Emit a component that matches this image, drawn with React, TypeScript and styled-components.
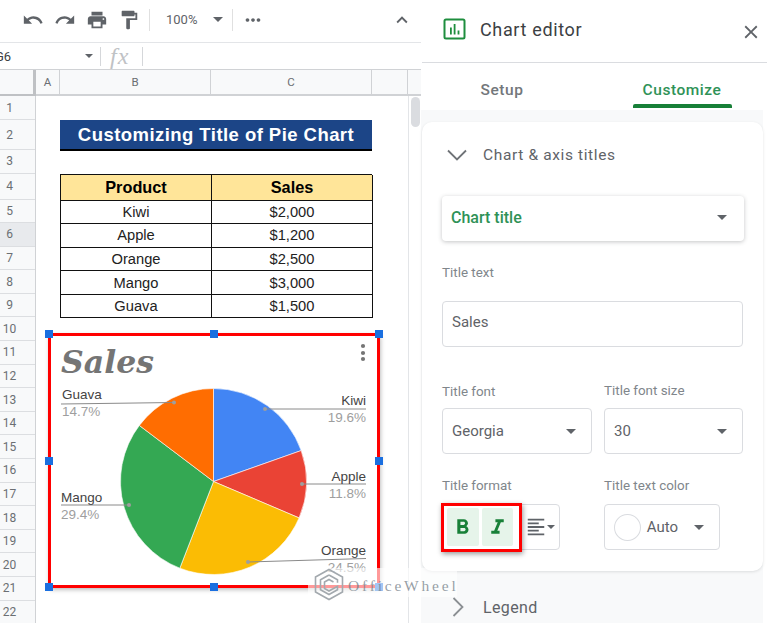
import { FC } from 'react';
import styled, { createGlobalStyle } from 'styled-components';
import {
  MdUndo, MdRedo, MdPrint, MdFormatPaint, MdMoreHoriz, MdExpandLess, MdClose,
  MdFormatBold, MdFormatItalic, MdFormatAlignLeft,
} from 'react-icons/md';

const GlobalStyle = createGlobalStyle`
  html, body { margin: 0; padding: 0; background: #fff; overflow: hidden; }
  * { box-sizing: border-box; }
`;

const rowHeights = [24, 30, 23.5, 26, 23.6, 23.6, 23.6, 23.6, 23.6, 23.6, 23.6, 23.6, 23.6, 23.6, 23.6, 23.6, 23.6, 23.6, 23.6, 23.6, 23.6, 23.6];

const products = [
  { name: 'Kiwi', sales: '$2,000' },
  { name: 'Apple', sales: '$1,200' },
  { name: 'Orange', sales: '$2,500' },
  { name: 'Mango', sales: '$3,000' },
  { name: 'Guava', sales: '$1,500' },
];

const CX = 213.5;
const CY = 481.5;
const R = 93;

const slices = [
  { pct: 19.6, color: '#4285f4' },
  { pct: 11.8, color: '#ea4335' },
  { pct: 24.5, color: '#fbbc04' },
  { pct: 29.4, color: '#34a853' },
  { pct: 14.7, color: '#ff6d01' },
];

const pieLabels = [
  { name: 'Kiwi', pct: '19.6%', x: 366, y: 405, end: true, line: '265,409 366,409' },
  { name: 'Apple', pct: '11.8%', x: 366, y: 481, end: true, line: '302,484 366,484' },
  { name: 'Orange', pct: '24.5%', x: 366, y: 555, end: true, line: '248,562 366,558.5' },
  { name: 'Mango', pct: '29.4%', x: 61, y: 502, end: false, line: '129,505 61,505' },
  { name: 'Guava', pct: '14.7%', x: 62, y: 399, end: false, line: '174,402.5 61,404' },
];

const handles = [
  ['0%', '0%'], ['50%', '0%'], ['100%', '0%'],
  ['0%', '50%'], ['100%', '50%'],
  ['0%', '100%'], ['50%', '100%'], ['100%', '100%'],
];

const slicePath = (from: number, to: number) => {
  const a0 = (from / 100) * 2 * Math.PI;
  const a1 = (to / 100) * 2 * Math.PI;
  const x0 = CX + R * Math.sin(a0);
  const y0 = CY - R * Math.cos(a0);
  const x1 = CX + R * Math.sin(a1);
  const y1 = CY - R * Math.cos(a1);
  const large = to - from > 50 ? 1 : 0;
  return `M${CX} ${CY}L${x0} ${y0}A${R} ${R} 0 ${large} 1 ${x1} ${y1}Z`;
};

const Page = styled.div`
  position: relative;
  display: flex;
  width: 767px;
  height: 623px;
  overflow: hidden;
  font-family: Roboto, "Liberation Sans", sans-serif;
`;

/* left side: the sheet */
const Sheet = styled.div`
  width: 421px;
  height: 623px;
  flex-shrink: 0;
  display: flex;
  flex-direction: column;
  overflow: hidden;
`;

const Toolbar = styled.div`
  height: 43px;
  flex-shrink: 0;
  display: flex;
  align-items: center;
  padding: 0 8px 3px 22px;
  color: #5f6368;
  border-bottom: 1px solid #e3e5e8;
`;

const ToolIcon = styled.span<{ $gap?: number }>`
  display: flex;
  margin-right: ${p => p.$gap ?? 10}px;
  font-size: 22px;
`;

const ToolSep = styled.span<{ $gap: number }>`
  width: 1px;
  height: 22px;
  background: #e0e0e0;
  margin-right: ${p => p.$gap}px;
`;

const Zoom = styled.span`
  font-size: 13px;
  color: #5f6368;
  width: 47px;
`;

const Caret = styled.span<{ $w?: number }>`
  display: inline-block;
  flex-shrink: 0;
  width: 0;
  height: 0;
  border-left: ${p => (p.$w ?? 10) / 2}px solid transparent;
  border-right: ${p => (p.$w ?? 10) / 2}px solid transparent;
  border-top: ${p => (p.$w ?? 10) / 2}px solid #5f6368;
`;

const ZoomCaret = styled(Caret)`
  margin-right: 9px;
`;

const Spacer = styled.span`
  flex: 1;
`;

const FormulaBar = styled.div`
  height: 27px;
  flex-shrink: 0;
  display: flex;
  align-items: center;
  border-bottom: 1px solid #d0d2d5;
`;

const NameBox = styled.span`
  width: 90px;
  margin-left: -5px;
  font-size: 13px;
  color: #3c4043;
`;

const FormulaSep = styled.span<{ $left: number }>`
  width: 1px;
  height: 19px;
  background: #d5d7da;
  margin-left: ${p => p.$left}px;
`;

const Fx = styled.span`
  width: 30px;
  margin-left: 9px;
  font-family: "Liberation Serif", serif;
  font-style: italic;
  font-size: 24px;
  line-height: 24px;
  color: #c0c2c5;
  letter-spacing: 1px;
`;

const ColHeader = styled.div`
  height: 26px;
  flex-shrink: 0;
  display: flex;
  background: #f8f9fa;
  border-bottom: 2px solid #d0d2d5;
`;

const Corner = styled.div`
  width: 36px;
  border-right: 3px solid #bfc1c4;
  border-bottom: 2px solid #bfc1c4;
  margin-bottom: -2px;
`;

const ColCell = styled.div<{ $width: number }>`
  width: ${p => p.$width}px;
  display: flex;
  align-items: center;
  justify-content: center;
  font-size: 11.5px;
  color: #6b6f73;
  border-right: 1px solid #d0d2d5;
`;

const SheetBody = styled.div`
  flex: 1;
  display: flex;
  min-height: 0;
`;

const RowHeads = styled.div`
  width: 36px;
  flex-shrink: 0;
  border-right: 1px solid #d0d2d5;
  background: #f8f9fa;
`;

const RowHead = styled.div<{ $height: number; $selected: boolean }>`
  height: ${p => p.$height}px;
  width: 35px;
  padding-right: 16px;
  display: flex;
  align-items: center;
  justify-content: center;
  font-size: 12px;
  color: #6b6f73;
  background: ${p => (p.$selected ? '#e8eaed' : 'transparent')};
  border-bottom: 1px solid #dcdee1;
`;

const Cells = styled.div`
  flex: 1;
  padding: 24px 36px 0 24px;
`;

const TitleBand = styled.div`
  height: 31px;
  width: 312px;
  display: flex;
  align-items: center;
  justify-content: center;
  background: #1c4587;
  border-bottom: 2px solid #000;
  color: #fff;
  font-family: "Liberation Sans", Arial, sans-serif;
  font-weight: 700;
  font-size: 18.5px;
  letter-spacing: 0.45px;
`;

const DataTable = styled.div`
  display: grid;
  width: 312px;
  margin-top: 22.5px;
  grid-template-columns: 151px 161px;
  grid-template-rows: 26px repeat(5, 23.6px);
  border: 1px solid #111;
  border-width: 1px 0 0 1px;
  font-family: "Liberation Sans", Arial, sans-serif;
  color: #222;
`;

const DataCell = styled.div<{ $head?: boolean }>`
  display: flex;
  align-items: center;
  justify-content: center;
  border: 1px solid #111;
  border-width: 0 1px 1px 0;
  background: ${p => (p.$head ? '#ffe599' : '#fff')};
  font-weight: ${p => (p.$head ? 700 : 400)};
  font-size: ${p => (p.$head ? 16.3 : 14.7)}px;
  color: ${p => (p.$head ? '#000' : '#222')};
`;

const ScrollTrack = styled.div`
  width: 13px;
  flex-shrink: 0;
  padding: 1px 1px 0 2px;
  border-left: 1px solid #e3e5e8;
`;

const ScrollThumb = styled.div`
  height: 30px;
  width: 9px;
  border-radius: 5px;
  background: #dadce0;
`;

/* chart floating over the cells */
const ChartFrame = styled.div`
  position: absolute;
  left: 49px;
  top: 334px;
  width: 330px;
  height: 253px;
  background: #fff;
  box-shadow: 1px 2px 5px rgba(0, 0, 0, 0.35);
  outline: 3px solid #f00;
  outline-offset: -2px;
`;

const ChartSvg = styled.svg`
  display: block;
  width: 100%;
  height: 100%;
`;

const Handle = styled.span<{ $x: string; $y: string }>`
  position: absolute;
  left: ${p => p.$x};
  top: ${p => p.$y};
  width: 8px;
  height: 8px;
  margin: -4px 0 0 -4px;
  background: #1a6fe0;
`;

/* right side: chart editor */
const Panel = styled.aside`
  width: 346px;
  height: 623px;
  flex-shrink: 0;
  display: flex;
  flex-direction: column;
  color: #5f6368;
`;

const PanelHeader = styled.header`
  height: 63px;
  flex-shrink: 0;
  display: flex;
  align-items: center;
  padding: 0 5px 4px 21px;
  border-bottom: 1px solid #dadce0;
  margin-left: 1px;
`;

const PanelTitle = styled.h1`
  margin: 0 0 0 14px;
  font-size: 18px;
  font-weight: 400;
  letter-spacing: 0.65px;
  color: #3c4043;
  flex: 1;
`;

const CloseBtn = styled.span`
  display: flex;
  font-size: 22px;
  margin-top: 5px;
  color: #5f6368;
`;

const Tabs = styled.nav`
  height: 47px;
  flex-shrink: 0;
  display: flex;
  gap: 81px;
  padding-left: 31.5px;
`;

const Tab = styled.div`
  width: 99px;
  display: flex;
  flex-direction: column;
  align-items: center;
  padding-top: 17px;
`;

const TabLabel = styled.span<{ $active?: boolean }>`
  line-height: 20px;
  font-size: 15.5px;
  font-weight: 500;
  letter-spacing: 0.55px;
  color: ${p => (p.$active ? '#2f9257' : '#73777b')};
`;

const TabLine = styled.span`
  width: 100%;
  height: 4px;
  margin-top: 4px;
  border-radius: 2px 2px 0 0;
  background: #188038;
`;

const PanelBody = styled.div`
  flex: 1;
  width: 342px;
  background: #f8f9fa;
  padding: 12px 0 0 1px;
  min-height: 0;
`;

const Card = styled.section`
  width: 341px;
  height: 449px;
  padding: 0 20px;
  background: #fff;
  border-radius: 10px;
  box-shadow: 0 1px 3px rgba(60, 64, 67, 0.15);
`;

const SectionHead = styled.div`
  height: 66px;
  display: flex;
  align-items: center;
  gap: 16px;
  padding-left: 5px;
  font-size: 15.5px;
  letter-spacing: 0.63px;
  color: #5f6368;
`;

const ChartTitleSelect = styled.div`
  width: 302px;
  height: 45px;
  margin-top: 8px;
  padding: 0 17px 3px 9px;
  display: flex;
  align-items: center;
  justify-content: space-between;
  border-radius: 4px;
  background: #fff;
  box-shadow: 0 1px 4px rgba(60, 64, 67, 0.3);
  color: #2f9257;
  font-size: 16px;
  font-weight: 500;
`;

const FieldRow = styled.div<{ $top: number }>`
  display: grid;
  grid-template-columns: 150px 139px;
  column-gap: 12px;
  margin-top: ${p => p.$top}px;
`;

const FullField = styled.div<{ $top: number }>`
  margin-top: ${p => p.$top}px;
`;

const Label = styled.div<{ $gap: number; $shift?: number }>`
  height: 18px;
  line-height: 18px;
  margin-bottom: ${p => p.$gap}px;
  font-size: 13.4px;
  color: #80868b;
  transform: translateY(${p => p.$shift ?? 0}px);
`;

const Box = styled.div<{ $width?: number }>`
  width: ${p => (p.$width ? `${p.$width}px` : '100%')};
  height: 46px;
  padding: 0 15px 0 9px;
  display: flex;
  align-items: center;
  justify-content: space-between;
  border: 1px solid #dadce0;
  border-radius: 4px;
  font-size: 15px;
  color: #5f6368;
`;

const TitleInput = styled(Box)`
  padding-bottom: 5px;
`;

const FormatGroup = styled.div`
  width: 118px;
  height: 46px;
  display: flex;
  align-items: center;
  padding: 0 4px;
  border: 1px solid #dadce0;
  border-radius: 4px;
`;

const FormatBtn = styled.span`
  width: 33px;
  height: 38px;
  margin-right: 3px;
  display: flex;
  align-items: center;
  justify-content: center;
  border-radius: 2px;
  background: #e6f4ea;
  color: #188038;
  font-size: 25px;
`;

const AlignBtn = styled.span`
  display: flex;
  align-items: center;
  margin-left: 9px;
  color: #5f6368;
  font-size: 22px;
`;

const Highlight = styled.div`
  position: absolute;
  left: 441px;
  top: 503px;
  width: 81px;
  height: 49px;
  border: 3px solid #f00;
  box-shadow: 1px 2px 5px rgba(0, 0, 0, 0.4);
`;

const Swatch = styled.span`
  width: 27px;
  height: 27px;
  border-radius: 50%;
  border: 1px solid #dadce0;
  background: #fff;
`;

const AutoLabel = styled.span`
  margin: 0 16px 0 6px;
`;

const ColorBox = styled(Box)`
  justify-content: flex-start;
`;

const LegendRow = styled.div`
  display: flex;
  align-items: center;
  gap: 19px;
  margin: 26px 0 0 30px;
  font-size: 16px;
  letter-spacing: 0.35px;
  color: #5f6368;
`;

/* watermark, lies over both sides */
const Watermark = styled.div`
  position: absolute;
  left: 308px;
  top: 568px;
  width: 149px;
  height: 29px;
  padding-left: 5px;
  display: flex;
  gap: 3px;
  background: rgba(255, 255, 255, 0.6);
  font-family: "Liberation Serif", serif;
  font-size: 15.5px;
  letter-spacing: 2.8px;
  line-height: 36px;
  color: rgba(115, 125, 135, 0.75);
`;

const WatermarkLogo = styled.svg`
  flex-shrink: 0;
  width: 32px;
  height: 33px;
`;

const ChartIcon: FC = () => (
  <svg width="23" height="22" viewBox="0 0 23 22">
    <rect x="1.5" y="1.5" width="20" height="19" rx="1.5" fill="none" stroke="#1e8e3e" strokeWidth="2" />
    <path d="M7 9.5h1.8v7H7zM10.7 6h1.8v10.5h-1.8zM14.6 12.5h1.8v4h-1.8z" fill="#1e8e3e" />
  </svg>
);

const Chevron: FC<{ dir: 'down' | 'right' }> = ({ dir }) => (
  dir === 'down' ? (
    <svg width="20" height="12" viewBox="0 0 20 12">
      <path d="M1 1.5l9 9 9-9" fill="none" stroke="#6f7377" strokeWidth="1.8" />
    </svg>
  ) : (
    <svg width="12" height="20" viewBox="0 0 12 20">
      <path d="M1.5 1l9 9-9 9" fill="none" stroke="#8b8f93" strokeWidth="1.8" />
    </svg>
  )
);

const PieChart: FC = () => {
  let acc = 0;
  return (
    <ChartSvg viewBox="49 334 330 253">
      <text x="61" y="373" fontFamily="'DejaVu Serif', serif" fontWeight="700" fontStyle="italic" fontSize="31.5" fill="#757575">Sales</text>
      <circle cx="363" cy="346" r="2.1" fill="#757575" />
      <circle cx="363" cy="353" r="2.1" fill="#757575" />
      <circle cx="363" cy="359" r="2.1" fill="#757575" />
      {slices.map(s => {
        const d = slicePath(acc, acc + s.pct);
        acc += s.pct;
        return <path key={s.color} d={d} fill={s.color} stroke="#fff" strokeWidth="0.6" />;
      })}
      {pieLabels.map(l => {
        const [start] = l.line.split(' ');
        const [dx, dy] = start.split(',');
        return (
          <g key={l.name} fontFamily="'Liberation Sans', Arial, sans-serif" fontSize="13.5" textAnchor={l.end ? 'end' : 'start'}>
            <polyline points={l.line} fill="none" stroke="#8a8a8a" strokeWidth="1" />
            <circle cx={dx} cy={dy} r="2" fill="#9e9e9e" />
            <text x={l.x} y={l.y} fill="#444">{l.name}</text>
            <text x={l.x} y={l.y + 16.5} fill="#9e9e9e">{l.pct}</text>
          </g>
        );
      })}
    </ChartSvg>
  );
};

const App: FC = () => (
  <Page>
    <GlobalStyle />
    <Sheet>
      <Toolbar>
        <ToolIcon $gap={10}><MdUndo /></ToolIcon>
        <ToolIcon $gap={10}><MdRedo /></ToolIcon>
        <ToolIcon $gap={10}><MdPrint /></ToolIcon>
        <ToolIcon $gap={9}><MdFormatPaint /></ToolIcon>
        <ToolSep $gap={16} />
        <Zoom>100%</Zoom>
        <ZoomCaret />
        <ToolSep $gap={9} />
        <ToolIcon><MdMoreHoriz /></ToolIcon>
        <Spacer />
        <ToolIcon $gap={0}><MdExpandLess /></ToolIcon>
      </Toolbar>
      <FormulaBar>
        <NameBox>G6</NameBox>
        <Caret $w={8} />
        <FormulaSep $left={7} />
        <Fx>fx</Fx>
        <FormulaSep $left={2} />
      </FormulaBar>
      <ColHeader>
        <Corner />
        <ColCell $width={24}>A</ColCell>
        <ColCell $width={151}>B</ColCell>
        <ColCell $width={161}>C</ColCell>
        <ColCell $width={36} />
      </ColHeader>
      <SheetBody>
        <RowHeads>
          {rowHeights.map((h, i) => (
            <RowHead key={i} $height={h} $selected={i === 5}>{i + 1}</RowHead>
          ))}
        </RowHeads>
        <Cells>
          <TitleBand>Customizing Title of Pie Chart</TitleBand>
          <DataTable>
            <DataCell $head>Product</DataCell>
            <DataCell $head>Sales</DataCell>
            {products.map(p => [
              <DataCell key={p.name}>{p.name}</DataCell>,
              <DataCell key={p.sales}>{p.sales}</DataCell>,
            ])}
          </DataTable>
        </Cells>
        <ScrollTrack><ScrollThumb /></ScrollTrack>
      </SheetBody>
    </Sheet>

    <Panel>
      <PanelHeader>
        <ChartIcon />
        <PanelTitle>Chart editor</PanelTitle>
        <CloseBtn><MdClose /></CloseBtn>
      </PanelHeader>
      <Tabs>
        <Tab><TabLabel>Setup</TabLabel></Tab>
        <Tab><TabLabel $active>Customize</TabLabel><TabLine /></Tab>
      </Tabs>
      <PanelBody>
        <Card>
          <SectionHead><Chevron dir="down" />Chart &amp; axis titles</SectionHead>
          <ChartTitleSelect>Chart title<Caret /></ChartTitleSelect>
          <FullField $top={23}>
            <Label $gap={19}>Title text</Label>
            <TitleInput>Sales</TitleInput>
          </FullField>
          <FieldRow $top={36}>
            <div>
              <Label $gap={7}>Title font</Label>
              <Box>Georgia<Caret /></Box>
            </div>
            <div>
              <Label $gap={7} $shift={-1}>Title font size</Label>
              <Box>30<Caret /></Box>
            </div>
          </FieldRow>
          <FieldRow $top={23}>
            <div>
              <Label $gap={9}>Title format</Label>
              <FormatGroup>
                <FormatBtn><MdFormatBold /></FormatBtn>
                <FormatBtn><MdFormatItalic /></FormatBtn>
                <AlignBtn><MdFormatAlignLeft /><Caret $w={8} /></AlignBtn>
              </FormatGroup>
            </div>
            <div>
              <Label $gap={9}>Title text color</Label>
              <ColorBox $width={116}>
                <Swatch />
                <AutoLabel>Auto</AutoLabel>
                <Caret />
              </ColorBox>
            </div>
          </FieldRow>
        </Card>
        <LegendRow><Chevron dir="right" />Legend</LegendRow>
      </PanelBody>
    </Panel>

    <ChartFrame>
      <PieChart />
      {handles.map(([x, y]) => <Handle key={x + y} $x={x} $y={y} />)}
    </ChartFrame>
    <Highlight />
    <Watermark>
      <WatermarkLogo viewBox="0 0 32 33">
        <path d="M16 1.500l13.500 7.500v15L16 31.500 2.500 24V9z" fill="none" stroke="#a3a9ae" strokeWidth="1.6" />
        <path d="M16 7l8.500 4.800v3M16 7l-8.500 4.800v10L16 26.500l8.500-4.700v-3.500L16 23l-4.500-2.500v-6.500L16 11.500l4.500 2.500" fill="none" stroke="#a3a9ae" strokeWidth="1.6" />
      </WatermarkLogo>
      OfficeWheel
    </Watermark>
  </Page>
);

export default App;
